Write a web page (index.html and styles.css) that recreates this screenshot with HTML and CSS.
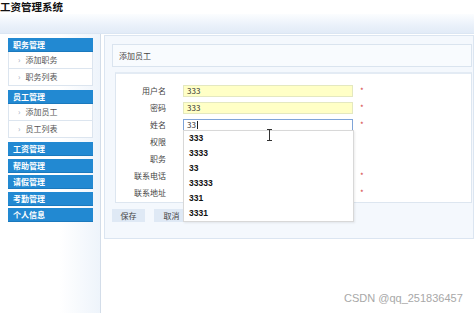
FILE: index.html
```html
<!DOCTYPE html>
<html lang="zh">
<head>
<meta charset="utf-8">
<title>工资管理系统</title>
<link rel="stylesheet" href="styles.css">
</head>
<body>
<div class="title">工资管理系统</div>
<div class="topbar"></div>
<div class="layout">
  <aside class="sidebar">
    <div class="group">
      <div class="group-head">职务管理</div>
      <div class="sub"><span class="arr">›</span>添加职务</div>
      <div class="sub"><span class="arr">›</span>职务列表</div>
    </div>
    <div class="group">
      <div class="group-head">员工管理</div>
      <div class="sub"><span class="arr">›</span>添加员工</div>
      <div class="sub"><span class="arr">›</span>员工列表</div>
    </div>
    <div class="group">
      <div class="group-head">工资管理</div>
    </div>
    <div class="group tight">
      <div class="group-head">帮助管理</div>
    </div>
    <div class="group tight">
      <div class="group-head">请假管理</div>
    </div>
    <div class="group tight">
      <div class="group-head">考勤管理</div>
    </div>
    <div class="group tight">
      <div class="group-head">个人信息</div>
    </div>
  </aside>
  <main class="main">
    <div class="panel">
      <div class="panel-head">添加员工</div>
      <div class="form-box">
        <div class="row"><label>用户名</label><div class="field"><div class="input filled">333</div></div><span class="req">*</span></div>
        <div class="row"><label>密码</label><div class="field"><div class="input filled">333</div></div><span class="req">*</span></div>
        <div class="row"><label>姓名</label>
          <div class="field">
            <div class="input focus">33<span class="caret"></span></div>
            <ul class="suggest">
              <li>333</li>
              <li>3333</li>
              <li>33</li>
              <li>33333</li>
              <li>331</li>
              <li>3331</li>
            </ul>
            <svg class="ibeam" width="7" height="12" viewBox="0 0 7 12"><path d="M1 0.5h5M3.5 0.5v11M1 11.5h5" stroke="#333" stroke-width="1" fill="none"/></svg>
          </div>
          <span class="req">*</span></div>
        <div class="row"><label>权限</label><div class="field"></div><span class="req none">*</span></div>
        <div class="row"><label>职务</label><div class="field"></div><span class="req none">*</span></div>
        <div class="row"><label>联系电话</label><div class="field"></div><span class="req">*</span></div>
        <div class="row"><label>联系地址</label><div class="field"></div><span class="req">*</span></div>
      </div>
      <div class="actions">
        <button class="btn">保存</button>
        <button class="btn">取消</button>
      </div>
    </div>
    <div class="watermark">CSDN @qq_251836457</div>
  </main>
</div>
</body>
</html>
```

FILE: styles.css
```css
* { box-sizing: border-box; }
html, body { margin: 0; padding: 0; }
body {
  width: 474px;
  height: 314px;
  overflow: hidden;
  background: #fff;
  font-family: "Noto Sans CJK SC", "Liberation Sans", sans-serif;
  font-size: 8px;
  color: #333;
}
.title {
  height: 14px;
  line-height: 14px;
  font-size: 10.5px;
  font-weight: bold;
  color: #111;
}
.topbar {
  height: 20px;
  background: linear-gradient(to bottom, #fbfdff 0%, #eaf1fa 60%, #e2ebf7 100%);
  border-bottom: 1px solid #dbe6f3;
}
.layout {
  display: flex;
  height: 279px;
}
.sidebar {
  width: 101px;
  flex: none;
  border-right: 1px solid #d3dde9;
  background: linear-gradient(to right, #ffffff 0%, #ffffff 60%, #eef4fb 100%);
  padding: 4px 7px 0 8px;
}
.group { margin-top: 4px; }
.group:first-child { margin-top: 0; }
.group.tight { margin-top: 2.5px; }
.group-head {
  height: 14px;
  line-height: 14px;
  background: #2289d2;
  color: #fff;
  font-weight: bold;
  padding-left: 5px;
  font-size: 8px;
  border-bottom: 1px solid #1b79bd;
}
.sub {
  height: 17px;
  line-height: 16px;
  background: #fff;
  border: 1px solid #dce5ef;
  border-top: none;
  color: #555;
  padding-left: 9px;
  font-size: 8px;
}
.arr {
  color: #9aaabb;
  margin-right: 5px;
  font-size: 8px;
}
.main {
  flex: 1;
  padding: 1px 0 0 3px;
  position: relative;
}
.panel {
  width: 370px;
  height: 204px;
  background: #f4f8fd;
  border: 1px solid #dbe5f1;
  padding: 8px 1px 0 7px;
}
.panel-head {
  height: 23px;
  line-height: 22px;
  background: #f8fbfe;
  border: 1px solid #dae4ef;
  padding-left: 6px;
  color: #444;
}
.form-box {
  margin: 5px 0 0 3px;
  height: 131px;
  background: #fff;
  border: 1px solid #dde6f0;
  border-top: 2px solid #e3ebf4;
  padding-top: 8px;
}
.row {
  display: flex;
  align-items: center;
  height: 17px;
}
.row label {
  width: 50px;
  text-align: right;
  color: #444;
  margin-right: 17px;
}
.field {
  width: 170px;
  height: 12px;
  position: relative;
}
.input {
  width: 170px;
  height: 12px;
  line-height: 10px;
  border: 1px solid #d7dcc9;
  padding-left: 3px;
  font-size: 8px;
  color: #333;
  background: #fff;
}
.input.filled { background: #ffffc6; border-color: #e4e8c0; }
.input.focus { border-color: #7fa4d8; }
.caret {
  display: inline-block;
  width: 1px;
  height: 8px;
  background: #222;
  vertical-align: -1px;
  margin-left: 1px;
}
.req {
  color: #d64545;
  margin-left: 7px;
  font-size: 8px;
}
.req.none { visibility: hidden; }
.suggest {
  position: absolute;
  top: 11px;
  left: 0;
  width: 171px;
  margin: 0;
  padding: 0;
  list-style: none;
  background: #fff;
  border: 1px solid #d8d8d8;
  box-shadow: 1px 1px 2px rgba(0,0,0,0.08);
  z-index: 5;
}
.suggest li {
  height: 15px;
  line-height: 15px;
  padding-left: 5px;
  font-family: "Liberation Sans", sans-serif;
  font-weight: bold;
  font-size: 8.5px;
  color: #111;
}
.ibeam {
  position: absolute;
  left: 83px;
  top: 10px;
  z-index: 6;
}
.actions {
  display: flex;
  gap: 9px;
  margin-top: 6px;
}
.btn {
  width: 33px;
  height: 13px;
  padding: 0;
  border: none;
  background: #dfe9f5;
  color: #444;
  font-family: "Noto Sans CJK SC", sans-serif;
  font-size: 8px;
  line-height: 13px;
}
.btn + .btn { width: 35px; }
.watermark {
  position: absolute;
  left: 243px;
  top: 258px;
  font-family: "Liberation Sans", sans-serif;
  font-size: 11px;
  color: #a8a8a8;
}
```
